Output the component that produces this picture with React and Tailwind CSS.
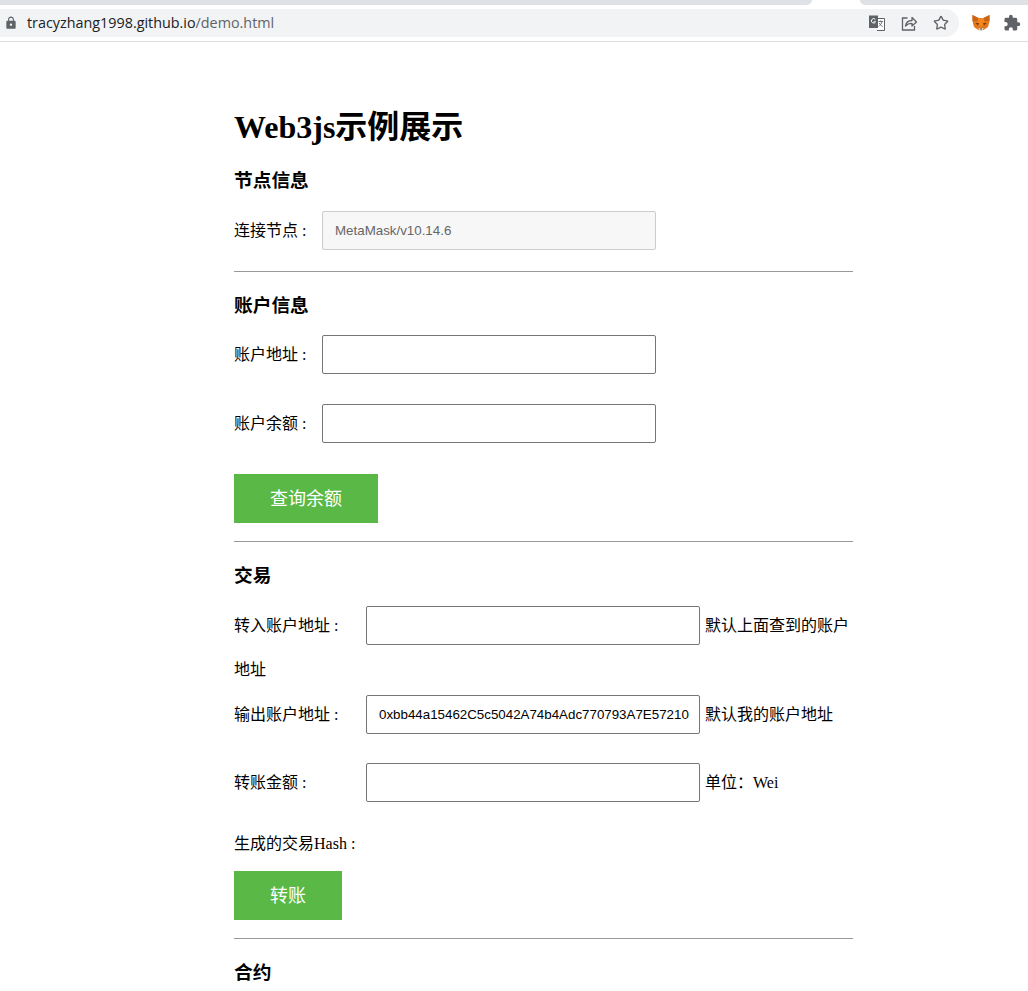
import { MdLock, MdExtension } from "react-icons/md";
import { Star } from "lucide-react";

const cjkSerif = "font-['Liberation_Serif','Noto_Sans_CJK_SC',serif]";

function Fox() {
    return (
        <svg width="18" height="18" viewBox="0 0 18 18">
            <polygon points="0.5,1 6.5,4 11.5,4 17.5,1 17.5,7 16,13 11.5,16 6.5,16 2,13 0.5,7" fill="#e2761b" />
            <polygon points="0.5,1 6.5,4 5.5,7 0.5,7" fill="#c9651a" />
            <polygon points="17.5,1 11.5,4 12.5,7 17.5,7" fill="#c9651a" />
            <polygon points="6.5,4 11.5,4 12.5,10 9,13 5.5,10" fill="#f6851b" />
            <polygon points="3.5,9 7,9 6,11.5" fill="#763d16" />
            <polygon points="14.5,9 11,9 12,11.5" fill="#763d16" />
            <polygon points="6.5,14 11.5,14 10.5,17 7.5,17" fill="#e4d7c8" />
            <polygon points="7.8,14.5 10.2,14.5 9,16" fill="#233447" />
        </svg>
    );
}

function Translate() {
    return (
        <svg width="16" height="16" viewBox="0 0 16 16">
            <path d="M7 3.5h8.5v12H8" fill="#fff" stroke="#5f6368" strokeWidth="1" />
            <path d="M9.5 6.5h4.5M11.7 5.5v1M13 6.5c-.5 2-1.7 3.7-3.2 5M10.3 8c.6 1.4 1.8 2.6 3.4 3.5" fill="none" stroke="#5f6368" strokeWidth="0.9" />
            <rect x="0" y="0.5" width="9" height="12.5" fill="#5f6368" />
            <path d="M6.3 4.4a2.2 2.2 0 1 0 .3 2.4H4.6" fill="none" stroke="#fff" strokeWidth="1" />
        </svg>
    );
}

function Share() {
    return (
        <svg width="18" height="18" viewBox="0 0 18 18" fill="none" stroke="#5f6368" strokeWidth="1.3">
            <path d="M7.5 4H2.5v12h12v-4" />
            <path d="M5.5 12c.5-3.5 3-5.5 6.5-5.5V3.5l4.5 4.5-4.5 4V9.3c-2.8 0-5 .8-6.5 2.7z" strokeLinejoin="round" />
        </svg>
    );
}

function BrowserBar() {
    return (
        <div className="h-[42px] bg-white border-b border-[#dadce0] shrink-0">
            <div className="h-[5px] flex justify-between">
                <div className="w-[812px] bg-[#dee1e6] rounded-br-lg"></div>
                <div className="w-[168px] bg-[#dee1e6] rounded-bl-lg"></div>
            </div>
            <div className="flex items-start pt-[4px]">
                <div className="w-[959px] h-[28px] bg-[#f1f3f4] rounded-r-full flex items-center">
                    <MdLock className="ml-[4px] text-[#5f6368] text-[14px]" />
                    <span className="ml-[9px] text-[14.35px] font-['Open_Sans',sans-serif] text-[#202124]">
                        tracyzhang1998.github.io<span className="text-[#5f6368]">/demo.html</span>
                    </span>
                    <div className="ml-auto flex items-center gap-[15px] pr-[10px]">
                        <Translate />
                        <Share />
                        <Star size={16} color="#5f6368" strokeWidth={2} />
                    </div>
                </div>
                <div className="mt-[5px] ml-[13px] flex items-center gap-[13px]">
                    <Fox />
                    <MdExtension className="text-[#5f6368] text-[18px]" />
                </div>
            </div>
        </div>
    );
}

function Field({ label, labelWidth, value, note, disabled }) {
    return (
        <>
            <label className={`inline-block align-middle ${labelWidth}`}>{label}</label>
            <input
                readOnly
                value={value || ""}
                className={
                    "inline-block align-middle w-[334px] h-[39px] pl-3 pr-[8px] border rounded-[2px] text-[13.33px] font-['Liberation_Sans',sans-serif] " +
                    (disabled ? "bg-[#f7f7f7] border-[#ccc] text-[#666]" : "bg-white border-[#767676] text-black")
                }
            />
            {note && <span className="inline-block align-middle ml-[5px]">{note}</span>}
        </>
    );
}

function GreenButton({ children }) {
    return <button className="block h-[49px] px-9 pt-[2px] bg-[#5ab946] text-white text-[18px]">{children}</button>;
}

export default function App() {
    return (
        <div className={`h-[991px] overflow-hidden bg-white text-black text-[16px] ${cjkSerif}`}>
            <BrowserBar />
            <div className="w-[619px] ml-[234px]">
                <h1 className="mt-[63px] text-[32px] leading-[44px] font-bold">Web3js示例展示</h1>
                <h3 className="mt-[18px] text-[18.72px] leading-[28px] font-bold">节点信息</h3>

                <div className="mt-[14px] leading-[39px]">
                    <Field label="连接节点 :" labelWidth="w-[88px]" value="MetaMask/v10.14.6" disabled />
                </div>
                <hr className="mt-[21px] border-[#999]" />

                <h3 className="mt-[20px] text-[18.72px] leading-[28px] font-bold">账户信息</h3>
                <div className="mt-[13px] leading-[39px]">
                    <Field label="账户地址 :" labelWidth="w-[88px]" />
                </div>
                <div className="mt-[29px] leading-[39px]">
                    <Field label="账户余额 :" labelWidth="w-[88px]" />
                </div>
                <div className="mt-[31px]">
                    <GreenButton>查询余额</GreenButton>
                </div>
                <hr className="mt-[18px] border-[#999]" />

                <h3 className="mt-[20px] text-[18.72px] leading-[28px] font-bold">交易</h3>
                <div className="mt-[14px] leading-[39px]">
                    <Field label="转入账户地址 :" labelWidth="w-[132px]" note="默认上面查到的账户" />
                </div>
                <p className="mt-[13px] leading-[24px]">地址</p>
                <div className="mt-[11px] leading-[39px]">
                    <Field
                        label="输出账户地址 :"
                        labelWidth="w-[132px]"
                        value="0xbb44a15462C5c5042A74b4Adc770793A7E57210"
                        note="默认我的账户地址"
                    />
                </div>
                <div className="mt-[27px] leading-[39px]">
                    <Field label="转账金额 :" labelWidth="w-[132px]" note="单位：Wei" />
                </div>
                <p className="mt-[30px] leading-[24px]">生成的交易Hash :</p>
                <div className="mt-[15px]">
                    <GreenButton>转账</GreenButton>
                </div>
                <hr className="mt-[18px] border-[#999]" />

                <h3 className="mt-[20px] text-[18.72px] leading-[28px] font-bold">合约</h3>
            </div>
        </div>
    );
}
